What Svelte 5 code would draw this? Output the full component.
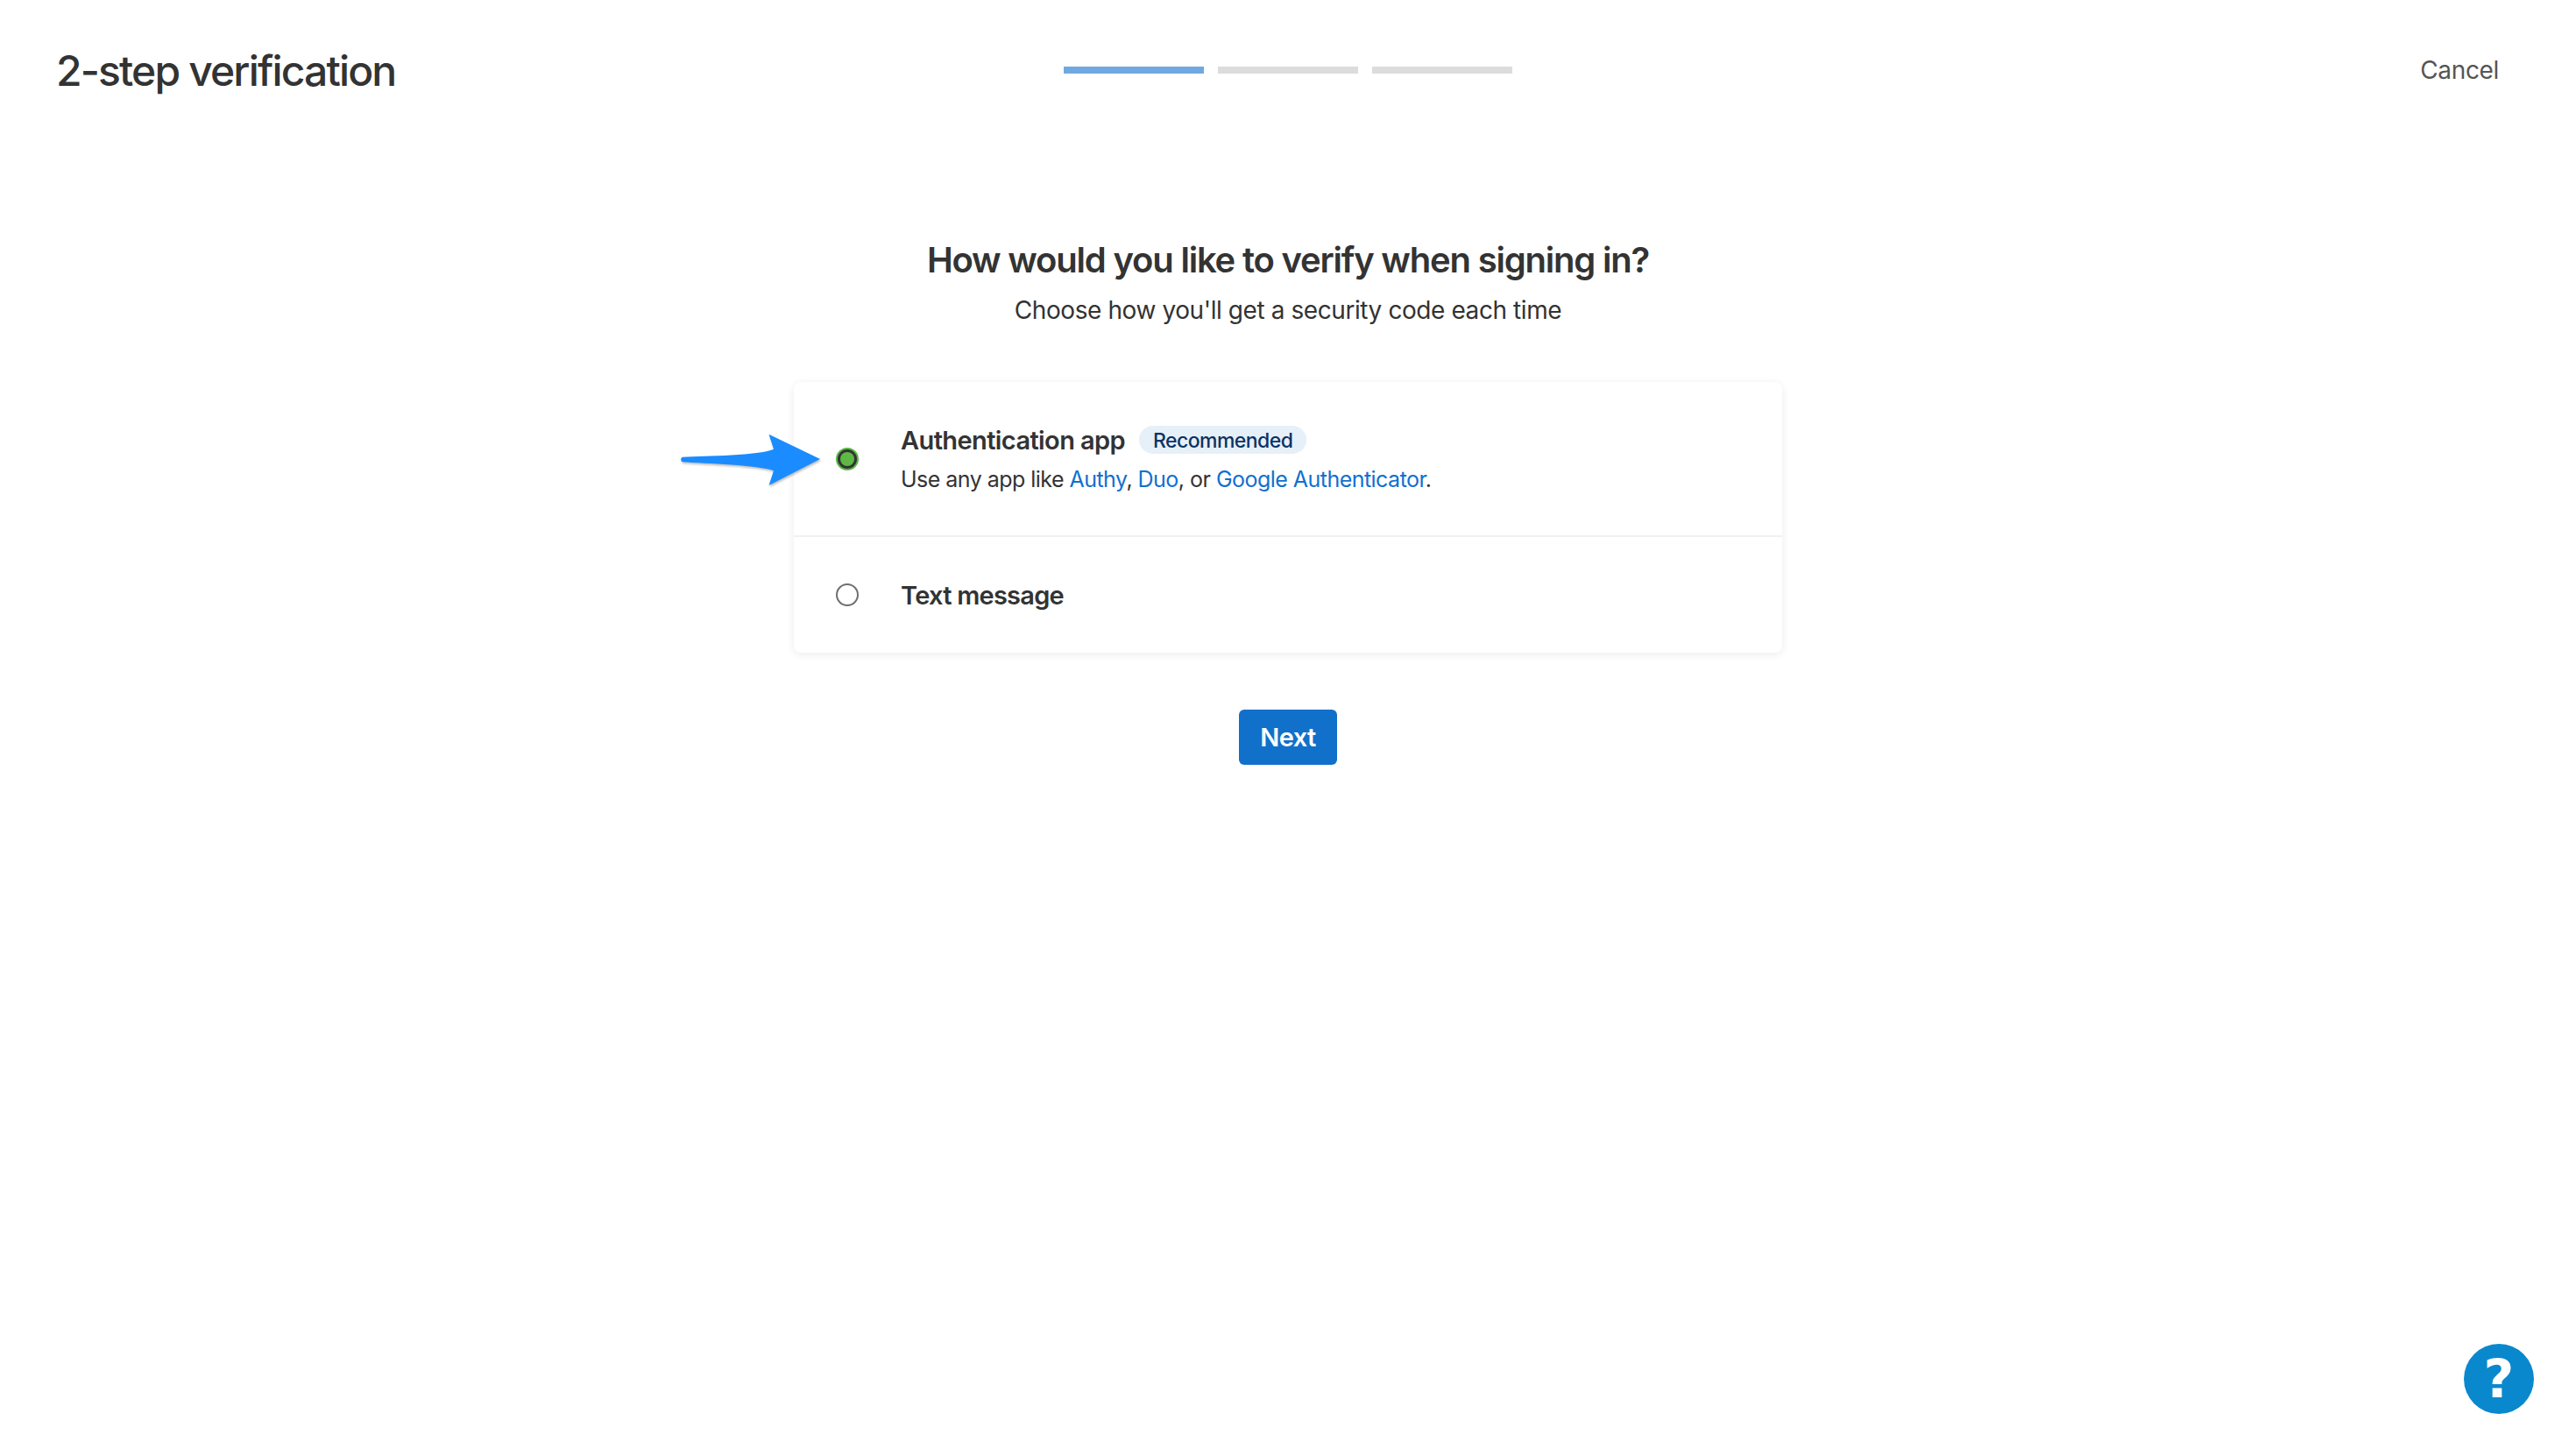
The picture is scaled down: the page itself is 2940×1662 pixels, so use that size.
<script>
  const steps = [true, false, false];
</script>

<div class="page">
  <header class="top">
    <h1 class="title">2-step verification</h1>
    <div class="progress">
      {#each steps as on}
        <span class="bar" class:on></span>
      {/each}
    </div>
    <a class="cancel" href="#cancel">Cancel</a>
  </header>

  <main class="main">
    <h2 class="question">How would you like to verify when signing in?</h2>
    <p class="sub">Choose how you'll get a security code each time</p>

    <div class="card">
      <svg class="arrow" width="172" height="72" viewBox="0 0 172 72" aria-hidden="true">
        <path d="M3 31.700C30 30.500 90 30 107 22.700L101.500 5.700L160 34L101.500 64L107 47.300C90 41 30 39 3 37.300C0.500 36.500 0.500 32.500 3 31.700Z" fill="#1a8cff" />
      </svg>
      <div class="row first">
        <span class="radio checked"><span class="dot"></span></span>
        <div class="text">
          <div class="label-line">
            <span class="label">Authentication app</span>
            <span class="pill">Recommended</span>
          </div>
          <p class="desc">Use any app like <a href="#authy">Authy</a>, <a href="#duo">Duo</a>, or <a href="#google">Google Authenticator</a>.</p>
        </div>
      </div>
      <div class="row second">
        <span class="radio"></span>
        <span class="label msg">Text message</span>
      </div>
    </div>

    <button class="next">Next</button>
  </main>

  <button class="help" aria-label="Help"><span>?</span></button>
</div>

<style>
  :global(body) {
    margin: 0;
    background: #fff;
  }
  .page {
    min-height: 1662px;
    font-family: Inter, "Liberation Sans", sans-serif;
    color: #333;
  }
  .top {
    display: grid;
    grid-template-columns: 1fr auto 1fr;
    align-items: center;
    height: 160px;
  }
  .title {
    margin: 0 0 0 64px;
    font-size: 48px;
    font-weight: 500;
    letter-spacing: -1.85px;
  }
  .progress {
    display: flex;
    gap: 16px;
  }
  .bar {
    width: 160px;
    height: 8px;
    background: #dcdcdc;
  }
  .bar.on {
    background: #70a9e0;
  }
  .cancel {
    justify-self: end;
    margin-right: 88px;
    font-size: 28px;
    letter-spacing: -0.35px;
    color: #555;
    text-decoration: none;
  }
  .main {
    display: flex;
    flex-direction: column;
    align-items: center;
    padding-top: 111px;
  }
  .question {
    margin: 0;
    font-size: 40px;
    line-height: 52px;
    font-weight: 600;
    letter-spacing: -1.2px;
  }
  .sub {
    margin: 11px 0 0;
    font-size: 28px;
    line-height: 40px;
    letter-spacing: -0.42px;
  }
  .card {
    position: relative;
    width: 1128px;
    margin-top: 62px;
    border-radius: 8px;
    background: #fff;
    box-shadow: 0 2px 10px rgba(0, 0, 0, 0.08);
  }
  .arrow {
    position: absolute;
    left: -130px;
    top: 54px;
    filter: drop-shadow(1px 2px 1px rgba(0, 0, 0, 0.25));
  }
  .row {
    display: flex;
    align-items: center;
    gap: 48px;
    padding-left: 48px;
  }
  .row.first {
    height: 177px;
    border-bottom: 2px solid #f0f0f0;
    box-sizing: border-box;
  }
  .row.second {
    height: 132px;
  }
  .radio {
    flex: none;
    box-sizing: border-box;
    width: 26px;
    height: 26px;
    border-radius: 50%;
    border: 2px solid #6f6f6f;
  }
  .radio.checked {
    display: flex;
    align-items: center;
    justify-content: center;
    border: 2px solid #58b845;
    background: #333;
  }
  .dot {
    width: 16px;
    height: 16px;
    border-radius: 50%;
    background: #5fb846;
  }
  .label {
    font-size: 29px;
    font-weight: 600;
    letter-spacing: -0.6px;
  }
  .label.msg {
    letter-spacing: -0.75px;
  }
  .label-line {
    display: flex;
    align-items: center;
    gap: 16px;
  }
  .pill {
    box-sizing: border-box;
    padding: 1px 16px 0;
    height: 32px;
    line-height: 32px;
    border-radius: 16px;
    background: #e6f0f9;
    color: #0b3364;
    font-size: 23px;
    font-weight: 500;
    letter-spacing: -0.55px;
  }
  .desc {
    margin: 11px 0 0;
    font-size: 25px;
    line-height: 32px;
    letter-spacing: -0.53px;
  }
  .desc a {
    color: #1170cf;
    text-decoration: none;
  }
  .next {
    margin-top: 65px;
    width: 112px;
    height: 63px;
    border: 0;
    border-radius: 6px;
    background: #1170c9;
    color: #fff;
    font: 600 29px Inter, "Liberation Sans", sans-serif;
    letter-spacing: -0.6px;
  }
  .help {
    position: fixed;
    right: 48px;
    bottom: 48px;
    width: 80px;
    height: 80px;
    padding: 0;
    border: 0;
    border-radius: 50%;
    background: #0a88cd;
    color: #fff;
    font: 700 60px/80px "DejaVu Sans", sans-serif;
  }
</style>
